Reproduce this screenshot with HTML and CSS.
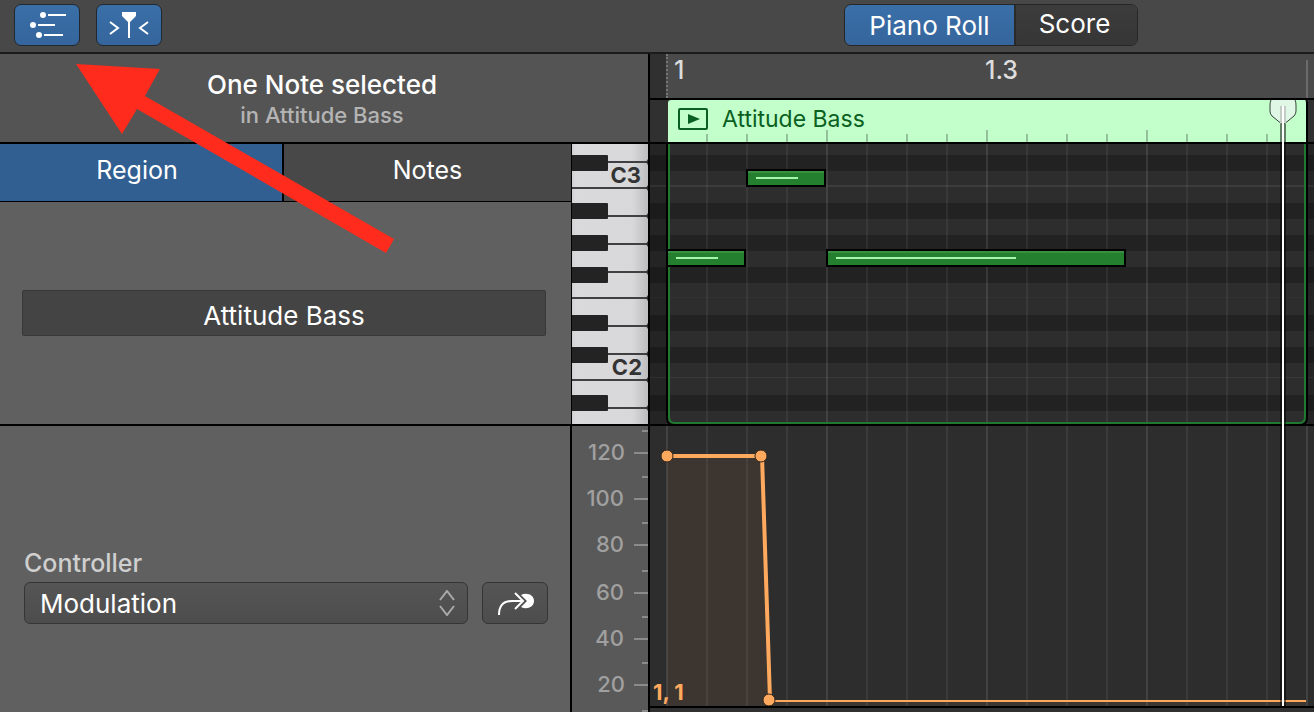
FILE: index.html
```html
<!DOCTYPE html>
<html lang="en">
<head>
<meta charset="utf-8">
<title>Piano Roll Editor</title>
<link rel="stylesheet" href="styles.css">
</head>
<body>
<div class="editor">
  <header class="toolbar">
    <button class="tool" type="button" aria-label="Show controller lanes">
      <svg width="64" height="40" viewBox="0 0 64 40" fill="#fff">
        <circle cx="28" cy="10" r="3"/><rect x="33" y="9" width="18" height="2"/>
        <circle cx="18" cy="20" r="3"/><rect x="23" y="19" width="17" height="2"/>
        <circle cx="24" cy="30" r="3"/><rect x="29" y="29" width="19" height="2"/>
      </svg>
    </button>
    <button class="tool" type="button" aria-label="Catch playhead">
      <svg width="64" height="40" viewBox="0 0 64 40">
        <path d="M25 7h14v4l-6 6v16h-2V17l-6-6z" fill="#fff"/>
        <path d="M13 17l8 6-8 6M51 17l-8 6 8 6" fill="none" stroke="#fff" stroke-width="2"/>
      </svg>
    </button>
    <div class="modes">
      <button class="mode mode-on" type="button">Piano Roll</button>
      <button class="mode" type="button">Score</button>
    </div>
  </header>

  <main class="workspace">
    <div class="side">
      <div class="summary">
        <h1 class="summary-title">One Note selected</h1>
        <p class="summary-sub">in Attitude Bass</p>
      </div>
      <div class="upper">
        <section class="inspector">
          <div class="tabs">
            <button class="tab tab-on" type="button">Region</button>
            <button class="tab" type="button">Notes</button>
          </div>
          <div class="name-area">
            <input class="region-name" type="text" value="Attitude Bass" aria-label="Region name">
          </div>
        </section>
        <svg class="keys" viewBox="0 0 76 280" preserveAspectRatio="none" role="img" aria-label="Keyboard">
          <defs>
            <linearGradient id="ivory"><stop offset="0" stop-color="#d0d0d2"/><stop offset=".05" stop-color="#dadadc"/><stop offset=".8" stop-color="#d8d8da"/><stop offset="1" stop-color="#bcbcbe"/></linearGradient>
          </defs>
          <rect width="76" height="280" fill="url(#ivory)"/>
          <path d="M36 18h40M0 44h76M36 72h40M36 100h40M36 128h40M0 154h76M36 182h40M36 210h40M0 236h76M36 264h40" stroke="#404042" stroke-width="2"/>
          <path d="M76 15v6l-2-3zM76 41v6l-2-3zM76 69v6l-2-3zM76 97v6l-2-3zM76 125v6l-2-3zM76 151v6l-2-3zM76 179v6l-2-3zM76 207v6l-2-3zM76 233v6l-2-3zM76 261v6l-2-3z" fill="#303032"/>
          <g fill="#232323">
            <rect x="-4" y="11" width="40" height="16" rx="1"/><rect x="-4" y="59" width="40" height="16" rx="1"/>
            <rect x="-4" y="91" width="40" height="16" rx="1"/><rect x="-4" y="123" width="40" height="16" rx="1"/>
            <rect x="-4" y="171" width="40" height="16" rx="1"/><rect x="-4" y="203" width="40" height="16" rx="1"/>
            <rect x="-4" y="251" width="40" height="16" rx="1"/>
          </g>
          <text class="key-label" x="69" y="39">C3</text>
          <text class="key-label" x="70" y="231">C2</text>
        </svg>
      </div>
      <div class="lower">
        <section class="controller">
          <label class="controller-label" for="controller">Controller</label>
          <div class="controller-row">
            <div class="picker">
              <select class="picker-select" id="controller"><option>Modulation</option></select>
              <svg class="picker-arrows" width="16" height="26" viewBox="0 0 16 26" fill="none" stroke="#aaa" stroke-width="2"><path d="M1 10l7-9 7 9M1 16l7 9 7-9"/></svg>
            </div>
            <button class="link-button" type="button" aria-label="Automation mode">
              <svg width="64" height="40" viewBox="0 0 64 40">
                <path d="M16 32C16 22 21 18 29 18h10M32 10l8 8-8 8" fill="none" stroke="#fff" stroke-width="2"/>
                <path d="M38 12c6-3 13 0 13 6s-7 9-13 6l6-6z" fill="#fff"/>
              </svg>
            </button>
          </div>
        </section>
        <svg class="scale" width="76" height="286" viewBox="0 0 76 286" role="img" aria-label="Controller value scale">
          <path d="M62 27h14M62 73h14M62 119h14M62 167h14M62 213h14M62 259h14M70 5h6M70 51h6M70 97h6M70 145h6M70 191h6M70 237h6M70 285h6" stroke="#8b8b8b" stroke-width="2"/>
          <g class="scale-label">
            <text x="53" y="34">120</text><text x="52" y="80">100</text><text x="52" y="126">80</text>
            <text x="52" y="174">60</text><text x="52" y="220">40</text><text x="53" y="266">20</text>
          </g>
        </svg>
      </div>
    </div>

    <div class="timeline">
      <div class="ruler">
        <span class="bar">1</span>
        <span class="bar">1.3</span>
        <span class="bar-line"></span>
      </div>
      <div class="strip">
        <div class="region">
          <svg width="30" height="22" viewBox="0 0 30 22"><rect x="1" y="1" width="28" height="20" rx="1" fill="none" stroke="#0a6020" stroke-width="2"/><path d="M10 6v10l12-5z" fill="#0a6020"/></svg>
          <span class="region-title">Attitude Bass</span>
          <svg class="region-ticks" width="638" height="12" viewBox="0 0 638 12">
            <path d="M39 4v8M79 4v8M119 4v8M159 0v12M199 4v8M239 4v8M279 4v8M319 0v12M359 4v8M399 4v8M439 4v8M479 0v12M519 4v8M559 4v8M599 4v8" stroke="#92c19b" stroke-width="2"/>
          </svg>
        </div>
      </div>
      <svg class="roll" role="img" aria-label="Notes">
        <rect width="100%" height="280" fill="#2d2d2d"/>
        <g fill="#222">
          <rect y="11" width="100%" height="16"/><rect y="59" width="100%" height="16"/><rect y="91" width="100%" height="16"/>
          <rect y="123" width="100%" height="16"/><rect y="171" width="100%" height="16"/><rect y="203" width="100%" height="16"/><rect y="251" width="100%" height="16"/>
        </g>
        <rect y="41" width="100%" height="2" fill="#3c3c3c"/>
        <rect y="153" width="100%" height="1" fill="#333"/>
        <rect y="233" width="100%" height="1" fill="#3a3a3a"/>
        <path d="M57 0v280M97 0v280M137 0v280M217 0v280M257 0v280M297 0v280M377 0v280M417 0v280M457 0v280M537 0v280M577 0v280M617 0v280" stroke="#fff" stroke-opacity=".06" stroke-width="2"/>
        <path d="M177 0v280M337 0v280M497 0v280" stroke="#fff" stroke-opacity=".1" stroke-width="2"/>
        <rect width="16" height="280" fill="#000" fill-opacity=".18"/>
        <rect x="658" width="100%" height="280" fill="#000" fill-opacity=".18"/>
        <path d="M17 0v274q0 7 7 7h626q7 0 7-7V0" fill="none" stroke="#000" stroke-width="2"/>
        <path d="M19 0v273q0 6 6 6h624q6 0 6-6V0" fill="none" stroke="#1f7a30" stroke-width="2"/>
        <g fill="#24802f" stroke="#000" stroke-width="2">
          <rect x="97" y="26" width="78" height="16"/><rect x="17" y="106" width="78" height="16"/><rect x="177" y="106" width="298" height="16"/>
        </g>
        <path d="M98 28h76M18 108h76M178 108h296" stroke="#37903f" stroke-width="2"/>
        <path d="M106 34h42M26 114h42M186 114h180" stroke="#a8f5b0" stroke-width="2"/>
      </svg>
      <svg class="automation" role="img" aria-label="Modulation automation">
        <path d="M57 0v280M97 0v280M137 0v280M217 0v280M257 0v280M297 0v280M377 0v280M417 0v280M457 0v280M537 0v280M577 0v280M617 0v280" stroke="#3a3a3a" stroke-width="2"/>
        <path d="M17 0v280M177 0v280M337 0v280M497 0v280M657 0v280" stroke="#424242" stroke-width="2"/>
        <path d="M17 30h94l8 245h537v5H17z" fill="#ffa95e" fill-opacity=".08"/>
        <path d="M17 30h95l8 244" fill="none" stroke="#ffa95e" stroke-width="4"/>
        <path d="M119 275h537" stroke="#ffa95e" stroke-width="2"/>
        <g fill="#ffa95e" stroke="#33261c" stroke-width="1"><circle cx="17" cy="30" r="6"/><circle cx="111" cy="30" r="6"/><circle cx="119" cy="274" r="6"/></g>
        <text class="position" x="3" y="274">1, 1</text>
      </svg>
      <svg class="playhead" width="32" height="608" viewBox="0 0 32 608" role="img" aria-label="Playhead">
        <rect x="13" y="26" width="6" height="582" fill="#000" fill-opacity=".5"/>
        <path d="M4 2q-1 2-1 5v6q0 3 2 5l11 9 11-9q2-2 2-5V7q0-3-1-5z" fill="#e1f7e6"/>
        <path d="M4 2q-1 2-1 5v6q0 3 2 5l11 9 11-9q2-2 2-5V7q0-3-1-5" fill="none" stroke="#37423a" stroke-width="1"/>
        <path d="M14 8v17M18 8v17" stroke="#c2cec5" stroke-width="2"/>
        <rect x="15" y="8" width="2" height="600" fill="#fff"/>
      </svg>
    </div>
  </main>
  <svg class="pointer" width="320" height="190" viewBox="0 0 320 190" aria-hidden="true"><path d="M0 0l84 5-15 27 249 143-8 14L61 45 46 70z" fill="#ff2b1c"/></svg>
</div>
</body>
</html>
```

FILE: styles.css
```css
* { box-sizing: border-box; }
body { margin: 0; background: #3a3a3a; color: #fff; font-family: Inter, Roboto, "Liberation Sans", sans-serif; font-size: 26px; }
button, input, select { font: inherit; color: inherit; margin: 0; padding: 0; border: 0; }
svg { display: block; }
.editor { position: relative; min-height: 100vh; display: flex; flex-direction: column; overflow: hidden; }

.toolbar { display: flex; gap: 16px; height: 54px; padding: 4px 176px 6px 14px; background: #484848; border-bottom: 2px solid #1b1b1b; }
.tool { width: 66px; height: 42px; border: 1px solid #202830; border-radius: 7px; background: linear-gradient(#3a6fa8, #35659c); }
.modes { display: flex; width: 294px; margin-left: auto; border: 1px solid #262626; border-radius: 7px; overflow: hidden; }
.mode { flex: 1; background: linear-gradient(#3c3c3c, #363636); border-left: 2px solid #2a2a2a; padding: 0 4px 4px 0; }
.mode-on { flex: 0 0 169px; padding-right: 0; padding-bottom: 0; background: linear-gradient(#3a6fa8, #35659c); border-left: 0; }

.workspace { flex: 1; display: grid; grid-template-columns: 650px minmax(0, 1fr); }
.side { display: flex; flex-direction: column; border-right: 2px solid #000; }
.summary { height: 90px; padding: 15px 4px 0 0; background: #545454; border-bottom: 2px solid #000; text-align: center; }
.summary-title { margin: 0; font-size: 26px; line-height: 32px; font-weight: 500; }
.summary-sub { margin: 0; font-size: 22px; line-height: 28px; font-weight: 500; color: #b4b4b4; }
.upper { display: flex; height: 282px; border-bottom: 2px solid #000; }
.inspector { flex: 1; display: flex; flex-direction: column; background: #606060; border-right: 1px solid #000; }
.tabs { display: flex; height: 58px; border-bottom: 1px solid #000; }
.tab { flex: 1; padding-bottom: 6px; font-size: 25px; background: #484848; }
.tab-on { flex: 0 0 284px; padding-right: 8px; background: #325f91; border-right: 2px solid #000; }
.name-area { flex: 1; display: flex; align-items: center; padding: 0 25px 0 22px; }
.region-name { width: 100%; height: 46px; padding-top: 4px; text-align: center; background: #444; border: 1px solid #383838; border-radius: 2px; }
.keys { width: 76px; height: 280px; }
.key-label { font-size: 22px; font-weight: 700; text-anchor: end; fill: #333; }
.lower { flex: 1; display: flex; }
.controller { flex: 1; padding: 120px 22px 0 24px; background: #606060; border-right: 2px solid #000; }
.controller-label { display: block; line-height: 34px; margin-bottom: 2px; color: #cfcfcf; font-size: 25px; font-weight: 500; }
.controller-row { display: flex; gap: 14px; }
.picker { position: relative; flex: 1; }
.picker-select { appearance: none; width: 100%; height: 42px; padding-left: 15px; background: linear-gradient(#555, #4d4d4d); border: 1px solid #353535; border-radius: 6px; }
.picker-arrows { position: absolute; right: 13px; top: 8px; pointer-events: none; }
.link-button { width: 66px; height: 42px; background: linear-gradient(#555, #4d4d4d); border: 1px solid #353535; border-radius: 6px; }
.scale { align-self: stretch; height: auto; background: #595959; }
.scale-label { font-size: 22px; font-weight: 500; text-anchor: end; fill: #a0a0a0; }

.timeline { position: relative; display: flex; flex-direction: column; overflow: hidden; background: #303030; }
.ruler { display: flex; height: 44px; margin-left: 16px; padding-left: 6px; background: #4a4a4a; border-left: 2px dotted #777; line-height: 32px; font-size: 25px; font-weight: 500; color: #ddd; }
.bar { flex: 0 0 311px; }
.bar-line { flex: 0 0 2px; margin: 6px 0 0 10px; background: #6b6b6b; }
.strip { height: 46px; padding-left: 18px; border-top: 2px solid #000; border-bottom: 2px solid #000; }
.region { position: relative; display: flex; align-items: center; gap: 14px; width: 640px; height: 42px; padding: 0 10px 4px; background: #c2ffcb; border-right: 2px solid #000; border-radius: 3px 3px 0 0; }
.region-title { font-size: 23px; color: #0a6020; }
.region-ticks { position: absolute; left: 0; bottom: 0; }
.roll { width: 100%; height: 282px; flex: none; border-bottom: 2px solid #000; }
.automation { width: 100%; height: 282px; flex: none; background: #2d2d2d; border-bottom: 2px solid #000; }
.position { font-size: 22px; font-weight: 700; fill: #ffa95e; }
.playhead { position: absolute; left: 617px; top: 44px; }
.pointer { position: absolute; left: 76px; top: 64px; pointer-events: none; }
```
